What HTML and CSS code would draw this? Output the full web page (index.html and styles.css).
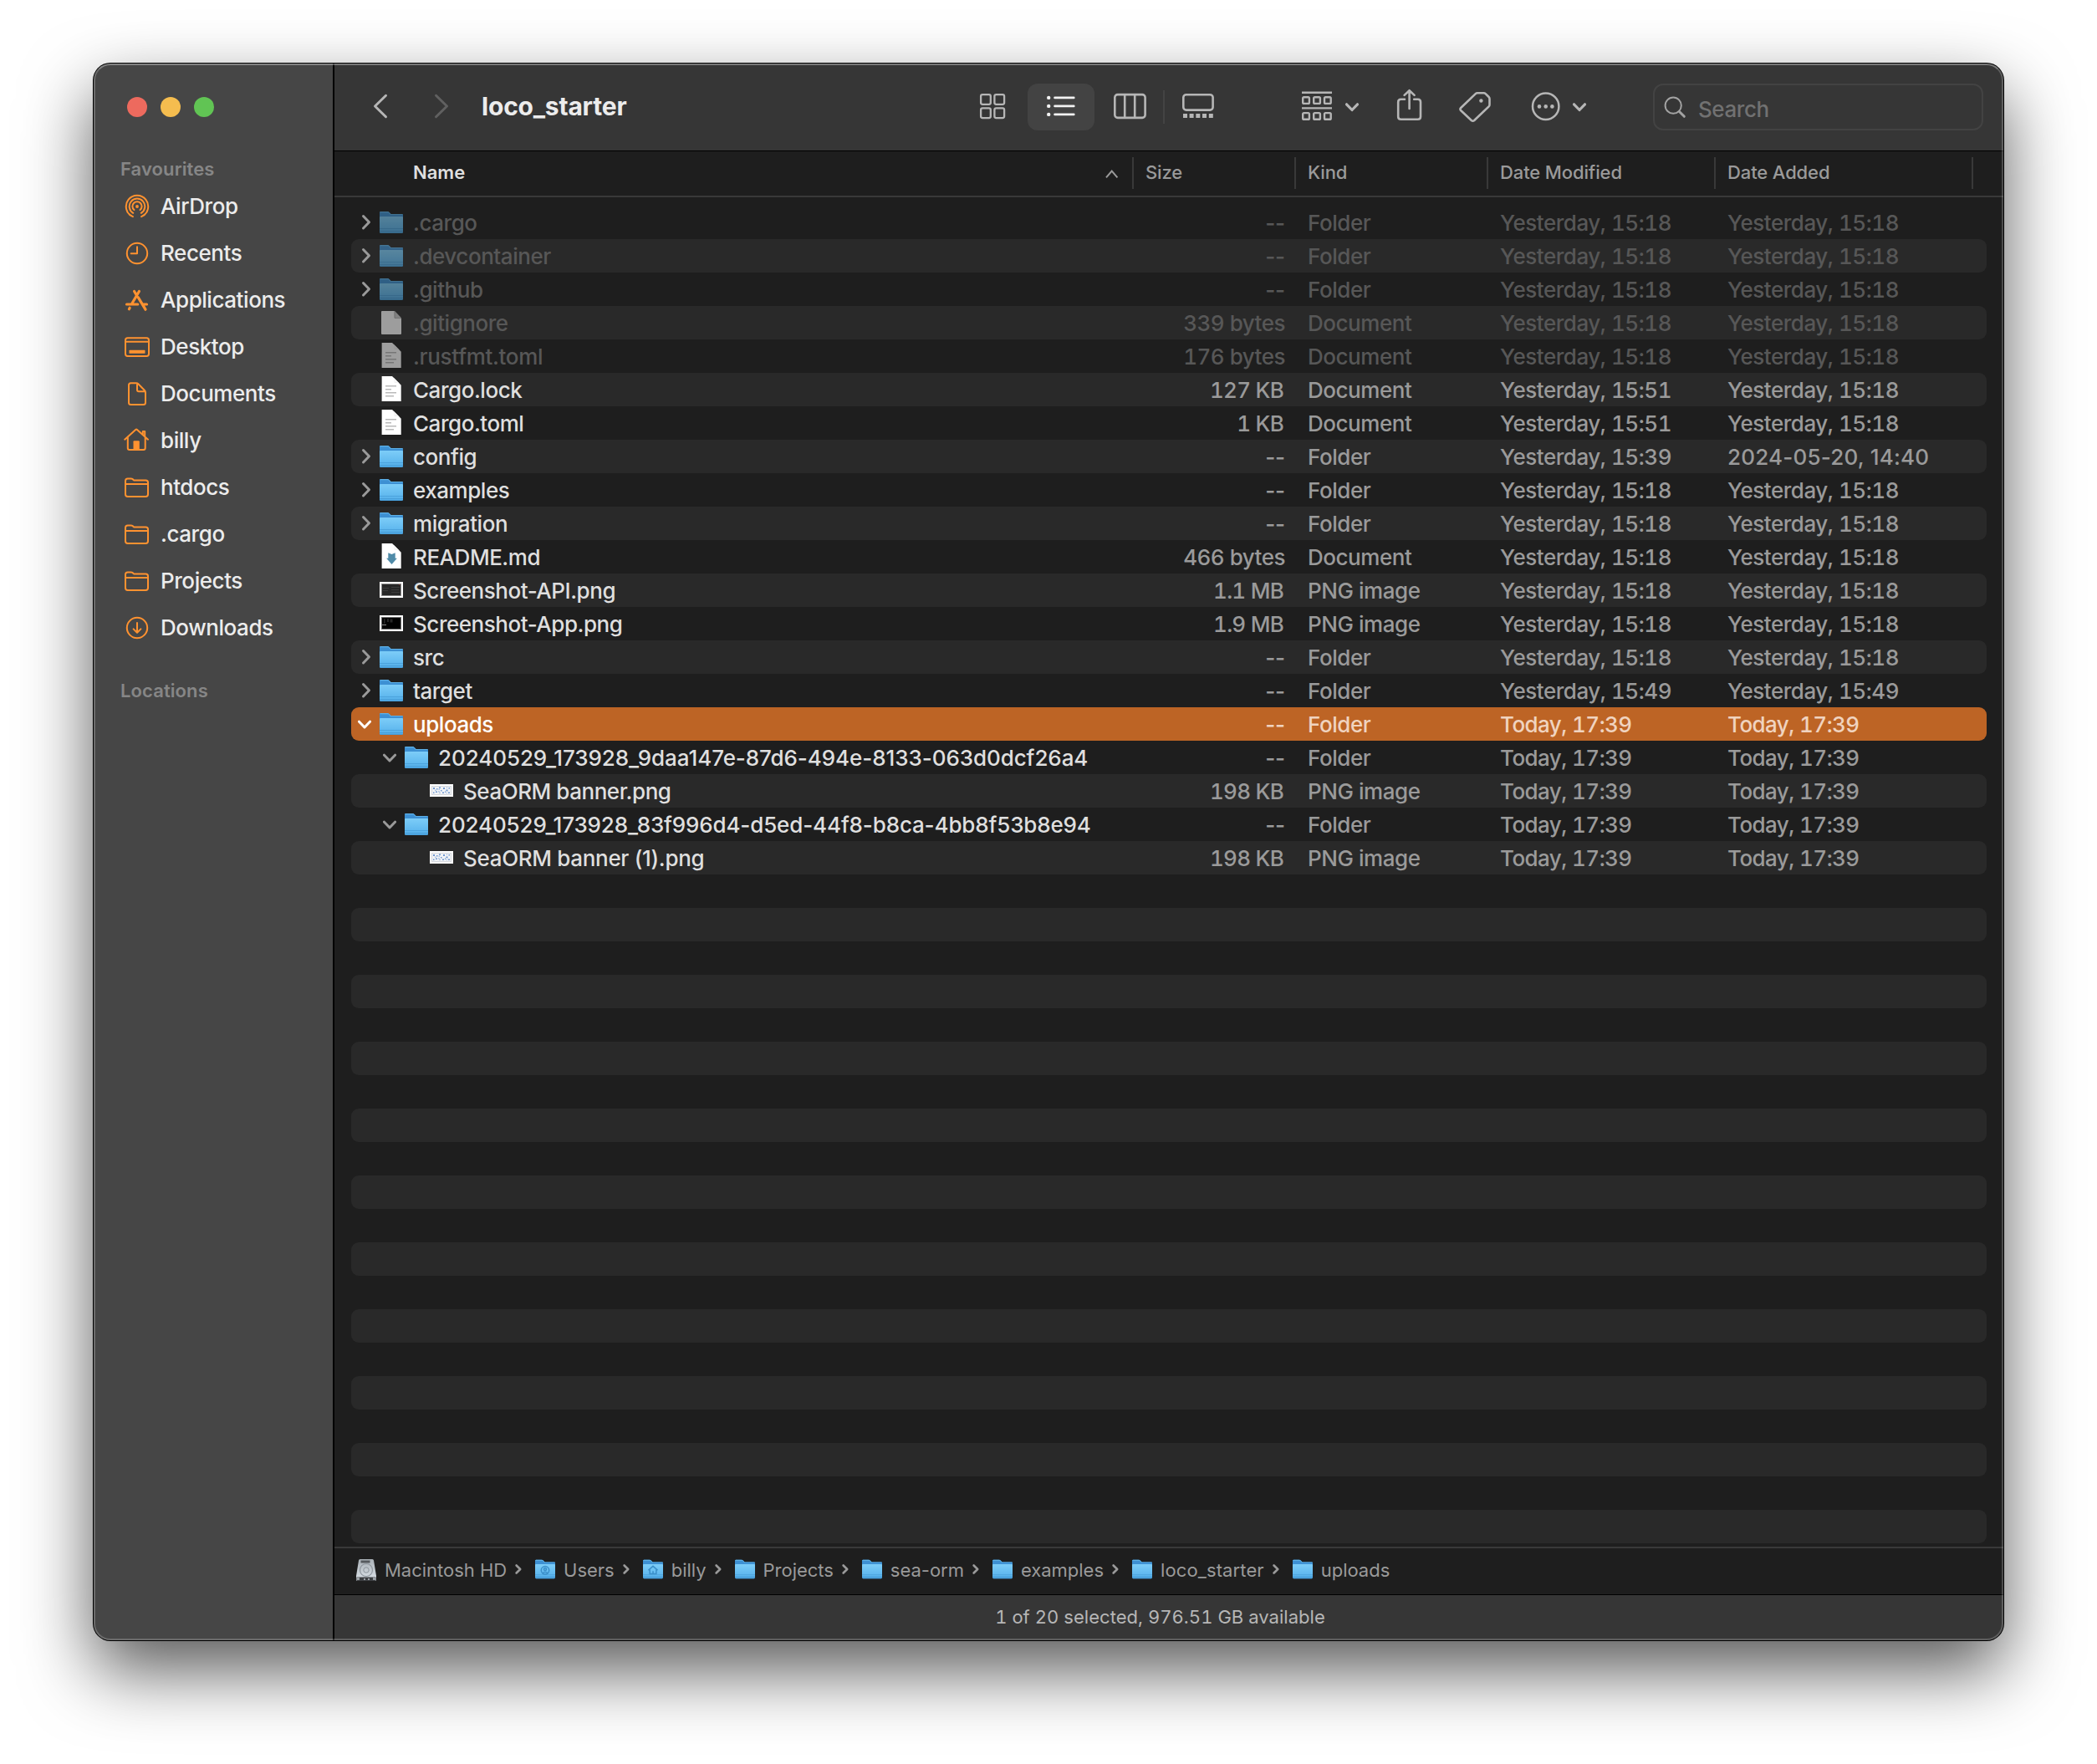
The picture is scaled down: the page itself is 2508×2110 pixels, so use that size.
FILE: index.html
```html
<!DOCTYPE html>
<html lang="en">
<head>
<meta charset="utf-8">
<title>loco_starter</title>
<link rel="stylesheet" href="styles.css">
</head>
<body>
<svg class="defs" aria-hidden="true">
  <defs>
    <linearGradient id="g-front" x1="0" y1="0" x2="0" y2="1"><stop offset="0" stop-color="#7dcdf8"/><stop offset=".75" stop-color="#5eb7ee"/><stop offset="1" stop-color="#4fa9e4"/></linearGradient>
    <linearGradient id="g-disk" x1="0" y1="0" x2="0" y2="1"><stop offset="0" stop-color="#a9b0b6"/><stop offset="1" stop-color="#dde4ea"/></linearGradient>
    <symbol id="folder" viewBox="0 0 28 40">
      <path fill="#3d90d3" d="M0 8.2Q0 7 1.2 7H9c1.2 0 2 .4 2.800 1.200L13.500 10H27q1 0 1 1V20H0z"/>
      <path fill="#5db0e6" d="M.3 7.700Q.6 7 1.400 7H9c1.200 0 2 .4 2.800 1.200L13.500 10H27.500v1H13L10.500 8.300H.3z"/>
      <path fill="url(#g-front)" d="M0 14q0-1 1-1H27q1 0 1 1V31.500q0 1.500-1.500 1.500h-25Q0 33 0 31.500z"/>
      <path fill="#3f92cd" d="M0 27.300h28v.7H0zM0 30.300h28v.7H0zM.8 32.300h26.400v.8H.8z" opacity=".75"/>
    </symbol>
    <symbol id="file" viewBox="0 0 28 40">
      <path fill="#fff" d="M2.600 4H15L25.700 14.700V34H2.600z"/>
      <path fill="#d8d8d8" d="M15 4L25.700 14.700Q23.500 11.200 17.800 11.400Q18.300 6 15 4z"/>
      <path fill="#f7f7f7" d="M16.500 5.500L24 13Q21 11.500 18 11.200Q18 8 16.500 5.500z"/>
      <path fill="#b9b9b9" d="M7 15h13v1.600H7zM7 19h7v1.600H7zM7 23h13v1.600H7zM7 27h10v1.600H7z"/>
    </symbol>
    <symbol id="blank" viewBox="0 0 28 40">
      <path fill="#fff" fill-opacity=".96" d="M2 7q0-1 1-1H17.800L26 14.500V33q0 1-1 1H3q-1 0-1-1z"/>
      <path fill="#c4c4c4" d="M17.800 6L26 14.500H18.800q-1 0-1-1z"/>
      <path fill="#777" d="M17.500 6h.8v7.500q0 .7.700.7h7v.8h-7.300q-1.200 0-1.200-1.200z" opacity=".6"/>
    </symbol>
    <symbol id="markdown" viewBox="0 0 28 40">
      <path fill="#fff" d="M2.600 4H15L25.700 14.700V34H2.600z"/>
      <path fill="#d8d8d8" d="M15 4L25.700 14.700Q23.500 11.200 17.800 11.400Q18.300 6 15 4z"/>
      <path fill="#f7f7f7" d="M16.500 5.500L24 13Q21 11.500 18 11.200Q18 8 16.500 5.500z"/>
      <path fill="#508ba8" d="M10.300 15.200L14.500 17l4.200-1.800v6.600h2.200L14.500 29l-6.400-7.200h2.200z"/>
    </symbol>
    <symbol id="shot" viewBox="0 0 28 40">
      <path fill="#fff" d="M0 10h28v19H0z"/><path fill="#8c8c8c" d="M2 12h24v15H2z"/><path fill="#262626" d="M3 13h22v13H3z"/>
      <path fill="#3b3b3b" d="M4 17h7v1H4zM4 20h6v1H4zM14 16h10v1H14zM14 19h9v1h-9zM14 22h10v1H14z"/><path fill="#7c3b35" d="M23 13h1.500v1H23z"/>
    </symbol>
    <symbol id="shot-dark" viewBox="0 0 28 40">
      <path fill="#fff" d="M0 10h28v19H0z"/><path fill="#6f6f6f" d="M2 12h24v15H2z"/><path fill="#000" d="M3 13h22v13H3z"/>
      <path fill="#262626" d="M5 14h1.500v6H5zM9 14h2v4H9zM12.500 14.500h3v4h-3z"/><path fill="#8b8b8b" d="M3 21h5v1H3z"/>
    </symbol>
    <symbol id="banner" viewBox="0 0 28 40">
      <path fill="#fff" d="M0 12h28v15H0z"/><path fill="#d4d7dc" d="M2 14h24v11H2z"/><path fill="#f1f3f6" d="M3 15h22v9H3z"/>
      <path fill="#6f97cf" d="M4 16h2v2H4zM8 17h1.500v1.500H8zM7 20.500h2V22H7zM11 15.500h2V17h-2zM13 19h1.500v1.500H13zM16 16h2v2h-2zM15 21.500h2V23h-2zM19.500 18.500h2v2h-2zM22.500 16h1.500v1.500h-1.500zM22 21.500h2V23h-2zM4 21.500h1.500V23H4zM10.500 20h1v1.500h-1zM18 20.500h1V22h-1z"/>
      <path fill="#a9bfe0" d="M6 18.500h1.500V20H6zM10.500 17.500H12V19h-1.500zM20 15.500h1V17h-1zM11 22h2v1h-2zM19.500 22H21v1h-1.500z"/>
    </symbol>
    <symbol id="closed" viewBox="0 0 26 40"><path d="M6.500 12.500L13.500 19.700L6.500 27" fill="none" stroke="currentColor" stroke-width="3" stroke-linecap="round" stroke-linejoin="round"/></symbol>
    <symbol id="open" viewBox="0 0 26 40"><path d="M1.500 17.200L8 24L14.500 17.200" fill="none" stroke="currentColor" stroke-width="3" stroke-linecap="round" stroke-linejoin="round"/></symbol>
    <symbol id="side-folder" viewBox="0 0 32 32"><path d="M2 24.300V8.200Q2 5.400 4.700 5.400H8.600Q9.800 5.400 10.600 6.100L11.500 6.900Q12.300 7.600 13.500 7.600H26.300Q29 7.600 29 10.200V24.300Q29 27 26.300 27H4.700Q2 27 2 24.300zM2.500 12.100H28.500"/></symbol>
    <symbol id="sep" viewBox="0 0 34 40"><path d="M11.600 15.500L16.200 20L11.600 24.500" fill="none" stroke="#9a9a9a" stroke-width="2.600" stroke-linecap="round" stroke-linejoin="round"/></symbol>
  </defs>
</svg>

<main class="window">
  <aside class="sidebar">
    <div class="lights"><i class="red"></i><i class="yellow"></i><i class="green"></i></div>
    <h2>Favourites</h2>
    <nav>
      <a><svg viewBox="0 0 32 32"><path d="M10.900 28.200A13.200 13.200 0 1 1 21.100 28.200M11.200 23.800A9.300 9.300 0 1 1 20.800 23.800M12.400 20.100A5.600 5.600 0 1 1 19.600 20.100"/><circle cx="16" cy="16" r="1.900" class="solid"/></svg>AirDrop</a>
      <a><svg viewBox="0 0 32 32"><circle cx="16" cy="16" r="12.200"/><path d="M16 8.200V16.300H8.700"/></svg>Recents</a>
      <a><svg viewBox="0 0 32 32" class="apps"><path d="M12.600 5.500L14.800 9.200M18.400 5.500L9.600 20.500M17.200 12.600L26 27.200M3.500 21H16.800M22.600 21H27.500M6.400 26.700L7.200 25.300"/></svg>Applications</a>
      <a><svg viewBox="0 0 32 32"><rect x="2" y="5.300" width="28" height="21.600" rx="2.600"/><path d="M2 9.700H30"/><rect x="6.500" y="19.800" width="19" height="4" rx=".6" class="solid"/></svg>Desktop</a>
      <a><svg viewBox="0 0 32 32"><path d="M6 26.500V5.800Q6 3.300 8.400 3.300H15Q16.400 3.300 17.400 4.300L25 12Q26 13 26 14.400V26.500Q26 29 23.500 29H8.500Q6 29 6 26.500zM16 3.500V11.300Q16 13.200 18 13.200H25.500"/></svg>Documents</a>
      <a><svg viewBox="0 0 32 32"><path d="M1.200 14.700L14.200 3Q15.100 2.200 16 3L29 14.700M4.800 12V25Q4.800 27 6.800 27H23.700Q25.700 27 25.700 25V12M22.800 8.600V5H25.200V11"/><path d="M11.500 27V17.200Q11.500 16.200 12.500 16.200H17.800Q18.800 16.200 18.800 17.200V27z" class="solid"/></svg>billy</a>
      <a><svg><use href="#side-folder"/></svg>htdocs</a>
      <a><svg><use href="#side-folder"/></svg>.cargo</a>
      <a><svg><use href="#side-folder"/></svg>Projects</a>
      <a><svg viewBox="0 0 32 32"><circle cx="16" cy="16" r="12.200"/><path d="M16 10V21.500M11.600 17.400L16 21.700L20.400 17.400"/></svg>Downloads</a>
    </nav>
    <h2 class="locations">Locations</h2>
  </aside>

  <section class="content">
    <header class="toolbar">
      <svg class="nav" viewBox="440 100 30 56"><path d="M461.500 114.300L448.500 127L461.500 139.700" fill="none" stroke="#b6b6b6" stroke-width="3" stroke-linecap="round" stroke-linejoin="round"/></svg>
      <svg class="nav forward" viewBox="513 100 30 56"><path d="M521.500 114.300L534.500 127L521.500 139.700" fill="none" stroke="#606060" stroke-width="3" stroke-linecap="round" stroke-linejoin="round"/></svg>
      <h1>loco_starter</h1>
      <div class="views">
        <svg class="view" viewBox="1147 100 80 56"><g fill="none" stroke="#b6b6b6" stroke-width="2.300"><rect x="1173.100" y="113.100" width="11.700" height="11.700" rx="2"/><rect x="1189.400" y="113.100" width="11.700" height="11.700" rx="2"/><rect x="1173.100" y="129.400" width="11.700" height="11.700" rx="2"/><rect x="1189.400" y="129.400" width="11.700" height="11.700" rx="2"/></g></svg>
        <svg class="view active" viewBox="1229 100 80 56"><g stroke="#f2f2f2" stroke-linecap="round"><path stroke-width="2.600" d="M1261.500 116.900H1284.300M1261.500 126.900H1284.300M1261.500 136.900H1284.300"/><path stroke-width="4.400" d="M1254.200 116.900h.01M1254.200 126.900h.01M1254.200 136.900h.01"/></g></svg>
        <svg class="view" viewBox="1311 100 80 56"><g fill="none" stroke="#b6b6b6" stroke-width="2.600"><rect x="1333.300" y="113.100" width="36.300" height="27.800" rx="3.400"/><path d="M1345.200 113V141M1357.200 113V141"/></g></svg>
        <i class="divider"></i>
        <svg class="view" viewBox="1393 100 80 56"><rect x="1415.300" y="113.200" width="35.300" height="18.400" rx="3.400" fill="none" stroke="#b6b6b6" stroke-width="2.600"/><path fill="#b6b6b6" d="M1415 136h5v5h-5zM1422.600 136h5v5h-5zM1430.300 136h5v5h-5zM1438 136h5v5h-5zM1445.800 136h5v5h-5z"/></svg>
      </div>
      <svg class="group" viewBox="1550 100 80 56"><path d="M1557 110.700H1593M1557 129.400H1593" stroke="#b6b6b6" stroke-width="2.400"/><g fill="none" stroke="#b6b6b6" stroke-width="2.400"><rect x="1558.200" y="116.200" width="7.700" height="7.700" rx="1.400"/><rect x="1571.200" y="116.200" width="7.700" height="7.700" rx="1.400"/><rect x="1584" y="116.200" width="7.700" height="7.700" rx="1.400"/><rect x="1558.200" y="135.100" width="7.700" height="7.700" rx="1.400"/><rect x="1571.200" y="135.100" width="7.700" height="7.700" rx="1.400"/><rect x="1584" y="135.100" width="7.700" height="7.700" rx="1.400"/></g><path d="M1610.500 124.800L1617 131.500L1623.500 124.800" fill="none" stroke="#b6b6b6" stroke-width="3.200" stroke-linecap="round" stroke-linejoin="round"/></svg>
      <svg class="share" viewBox="1665 100 40 56"><g fill="none" stroke="#b6b6b6" stroke-width="2.600" stroke-linecap="round" stroke-linejoin="round"><path d="M1680 118.800H1675.500Q1672.200 118.800 1672.200 122V139.500Q1672.200 142.700 1675.500 142.700H1695.700Q1699 142.700 1699 139.500V122Q1699 118.800 1695.700 118.800H1691.200"/><path d="M1685.600 130V108.600M1679.600 113.900L1685.600 108.200L1691.600 113.900"/></g></svg>
      <svg class="tag" viewBox="1740 100 50 56"><path d="M1767 111.200H1774.500Q1775.800 111.200 1776.700 112.100L1780.600 116Q1781.500 116.900 1781.500 118.200V125.200Q1781.500 126.500 1780.600 127.400L1763.200 144Q1761.500 145.500 1759.800 144L1747.300 132.300Q1745.600 130.700 1747.200 129L1764.800 112.100Q1765.700 111.200 1767 111.200z" fill="none" stroke="#b6b6b6" stroke-width="2.600" stroke-linejoin="round"/><circle cx="1771.400" cy="120.500" r="2.200" fill="#b6b6b6"/></svg>
      <svg class="more" viewBox="1825 100 80 56"><circle cx="1848.700" cy="127.200" r="15.700" fill="none" stroke="#b6b6b6" stroke-width="2.500"/><g fill="#b6b6b6"><circle cx="1841" cy="127.400" r="2.300"/><circle cx="1848.700" cy="127.400" r="2.300"/><circle cx="1856.400" cy="127.400" r="2.300"/></g><path d="M1882.500 124.800L1889 131.500L1895.500 124.800" fill="none" stroke="#b6b6b6" stroke-width="3.200" stroke-linecap="round" stroke-linejoin="round"/></svg>
      <div class="search"><svg viewBox="1985 108 36 40"><g fill="none" stroke="#a3a3a3" stroke-linecap="round"><circle cx="2001.200" cy="126.200" r="9.600" stroke-width="2"/><path d="M2008.500 133.500L2014.300 139.300" stroke-width="3"/></g></svg><span>Search</span></div>
    </header>

    <div class="cols head">
      <div class="name">Name<svg viewBox="0 0 20 12"><path d="M3 10.300L9.700 2.500L16.400 10.300" fill="none" stroke="#9a9a9a" stroke-width="2"/></svg></div>
      <div>Size</div><div>Kind</div><div>Date Modified</div><div>Date Added</div>
    </div>

    <div class="list">
      <div class="cols row hidden"><div class="name"><svg class="dis"><use href="#closed"/></svg><svg class="ico"><use href="#folder"/></svg>.cargo</div><div class="size">--</div><div>Folder</div><div>Yesterday, 15:18</div><div>Yesterday, 15:18</div></div>
      <div class="cols row hidden"><div class="name"><svg class="dis"><use href="#closed"/></svg><svg class="ico"><use href="#folder"/></svg>.devcontainer</div><div class="size">--</div><div>Folder</div><div>Yesterday, 15:18</div><div>Yesterday, 15:18</div></div>
      <div class="cols row hidden"><div class="name"><svg class="dis"><use href="#closed"/></svg><svg class="ico"><use href="#folder"/></svg>.github</div><div class="size">--</div><div>Folder</div><div>Yesterday, 15:18</div><div>Yesterday, 15:18</div></div>
      <div class="cols row hidden"><div class="name"><svg class="dis"></svg><svg class="ico"><use href="#blank"/></svg>.gitignore</div><div class="size bytes">339 bytes</div><div>Document</div><div>Yesterday, 15:18</div><div>Yesterday, 15:18</div></div>
      <div class="cols row hidden"><div class="name wide"><svg class="dis"></svg><svg class="ico"><use href="#file"/></svg>.rustfmt.toml</div><div class="size bytes">176 bytes</div><div>Document</div><div>Yesterday, 15:18</div><div>Yesterday, 15:18</div></div>
      <div class="cols row"><div class="name"><svg class="dis"></svg><svg class="ico"><use href="#file"/></svg>Cargo.lock</div><div class="size kb">127 KB</div><div>Document</div><div>Yesterday, 15:51</div><div>Yesterday, 15:18</div></div>
      <div class="cols row"><div class="name"><svg class="dis"></svg><svg class="ico"><use href="#file"/></svg>Cargo.toml</div><div class="size kb">1 KB</div><div>Document</div><div>Yesterday, 15:51</div><div>Yesterday, 15:18</div></div>
      <div class="cols row"><div class="name"><svg class="dis"><use href="#closed"/></svg><svg class="ico"><use href="#folder"/></svg>config</div><div class="size">--</div><div>Folder</div><div>Yesterday, 15:39</div><div class="iso">2024-05-20, 14:40</div></div>
      <div class="cols row"><div class="name"><svg class="dis"><use href="#closed"/></svg><svg class="ico"><use href="#folder"/></svg>examples</div><div class="size">--</div><div>Folder</div><div>Yesterday, 15:18</div><div>Yesterday, 15:18</div></div>
      <div class="cols row"><div class="name"><svg class="dis"><use href="#closed"/></svg><svg class="ico"><use href="#folder"/></svg>migration</div><div class="size">--</div><div>Folder</div><div>Yesterday, 15:18</div><div>Yesterday, 15:18</div></div>
      <div class="cols row"><div class="name"><svg class="dis"></svg><svg class="ico"><use href="#markdown"/></svg>README.md</div><div class="size bytes">466 bytes</div><div>Document</div><div>Yesterday, 15:18</div><div>Yesterday, 15:18</div></div>
      <div class="cols row"><div class="name"><svg class="dis"></svg><svg class="ico"><use href="#shot"/></svg>Screenshot-API.png</div><div class="size kb">1.1 MB</div><div>PNG image</div><div>Yesterday, 15:18</div><div>Yesterday, 15:18</div></div>
      <div class="cols row"><div class="name"><svg class="dis"></svg><svg class="ico"><use href="#shot-dark"/></svg>Screenshot-App.png</div><div class="size kb">1.9 MB</div><div>PNG image</div><div>Yesterday, 15:18</div><div>Yesterday, 15:18</div></div>
      <div class="cols row"><div class="name"><svg class="dis"><use href="#closed"/></svg><svg class="ico"><use href="#folder"/></svg>src</div><div class="size">--</div><div>Folder</div><div>Yesterday, 15:18</div><div>Yesterday, 15:18</div></div>
      <div class="cols row"><div class="name"><svg class="dis"><use href="#closed"/></svg><svg class="ico"><use href="#folder"/></svg>target</div><div class="size">--</div><div>Folder</div><div>Yesterday, 15:49</div><div>Yesterday, 15:49</div></div>
      <div class="cols row selected"><div class="name"><svg class="dis"><use href="#open"/></svg><svg class="ico"><use href="#folder"/></svg>uploads</div><div class="size">--</div><div>Folder</div><div class="today">Today, 17:39</div><div class="today">Today, 17:39</div></div>
      <div class="cols row"><div class="name l1"><svg class="dis"><use href="#open"/></svg><svg class="ico"><use href="#folder"/></svg>20240529_173928_9daa147e-87d6-494e-8133-063d0dcf26a4</div><div class="size">--</div><div>Folder</div><div class="today">Today, 17:39</div><div class="today">Today, 17:39</div></div>
      <div class="cols row"><div class="name l2"><svg class="dis"></svg><svg class="ico"><use href="#banner"/></svg>SeaORM banner.png</div><div class="size kb">198 KB</div><div>PNG image</div><div class="today">Today, 17:39</div><div class="today">Today, 17:39</div></div>
      <div class="cols row"><div class="name l1 second"><svg class="dis"><use href="#open"/></svg><svg class="ico"><use href="#folder"/></svg>20240529_173928_83f996d4-d5ed-44f8-b8ca-4bb8f53b8e94</div><div class="size">--</div><div>Folder</div><div class="today">Today, 17:39</div><div class="today">Today, 17:39</div></div>
      <div class="cols row"><div class="name l2 wide"><svg class="dis"></svg><svg class="ico"><use href="#banner"/></svg>SeaORM banner (1).png</div><div class="size kb">198 KB</div><div>PNG image</div><div class="today">Today, 17:39</div><div class="today">Today, 17:39</div></div>
      <div class="row"></div><div class="row"></div><div class="row"></div><div class="row"></div><div class="row"></div>
      <div class="row"></div><div class="row"></div><div class="row"></div><div class="row"></div><div class="row"></div>
      <div class="row"></div><div class="row"></div><div class="row"></div><div class="row"></div><div class="row"></div>
      <div class="row"></div><div class="row"></div><div class="row"></div><div class="row"></div><div class="row"></div>
    </div>

    <footer class="path">
      <svg class="pico" viewBox="0 0 24 40"><path fill="url(#g-disk)" d="M3 9.500Q3.200 8 4.600 8H19.400Q20.800 8 21 9.500L24 28V32.500Q24 34 22.500 34H1.500Q0 34 0 32.500V28z"/><path fill="#55595d" d="M5.500 9.500h11v3h-11z"/><circle cx="12" cy="21" r="7.500" fill="none" stroke="#8f979e" stroke-width="1.200"/><circle cx="12" cy="21" r="3.200" fill="none" stroke="#8f979e" stroke-width="1"/><path d="M.5 29.500h23V33q0 1-1 1h-21q-1 0-1-1z" fill="#3c3f42"/><path fill="#9aa0a5" d="M1 30h3v3H1zM9 31h2v2H9zM14 31h2v2h-2zM20 30h3v3h-3z"/></svg><span>Macintosh HD</span>
      <svg class="sep"><use href="#sep"/></svg><svg class="pico fold" viewBox="0 0 28 40"><use href="#folder" width="28" height="40"/><g fill="none" stroke="#3b8fc9" stroke-width="1.800"><circle cx="14" cy="21.500" r="5.500"/><circle cx="14" cy="20" r="1.800"/><path d="M10.500 25.500Q14 22 17.500 25.500"/></g></svg><span>Users</span>
      <svg class="sep"><use href="#sep"/></svg><svg class="pico fold" viewBox="0 0 28 40"><use href="#folder" width="28" height="40"/><path d="M7.500 21.500L14 15.800L20.500 21.500M9.500 20.500V26.500H18.500V20.500M14 26.500V22.500" fill="none" stroke="#3b8fc9" stroke-width="1.800"/></svg><span>billy</span>
      <svg class="sep"><use href="#sep"/></svg><svg class="pico fold"><use href="#folder"/></svg><span>Projects</span>
      <svg class="sep"><use href="#sep"/></svg><svg class="pico fold"><use href="#folder"/></svg><span>sea-orm</span>
      <svg class="sep"><use href="#sep"/></svg><svg class="pico fold"><use href="#folder"/></svg><span>examples</span>
      <svg class="sep"><use href="#sep"/></svg><svg class="pico fold"><use href="#folder"/></svg><span class="loco">loco_starter</span>
      <svg class="sep"><use href="#sep"/></svg><svg class="pico fold"><use href="#folder"/></svg><span>uploads</span>
    </footer>
    <footer class="status">1 of 20 selected, 976.51 GB available</footer>
  </section>
</main>
</body>
</html>
```
FILE: styles.css
```css
* { box-sizing: border-box; }
html, body { margin: 0; height: 2110px; background: #fff; overflow: hidden; }
body {
  padding: 76px 112px 0;
  font: 450 26px Inter, "Liberation Sans", sans-serif;
  letter-spacing: -0.44px;
  color: #dfdfdf;
}
svg { display: block; flex: none; }
.defs { position: absolute; width: 0; height: 0; }

.window {
  position: relative;
  display: flex;
  width: 2284px;
  height: 1886px;
  border-radius: 20px;
  overflow: hidden;
  background: #1e1e1e;
  box-shadow: 0 0 0 1px #000, 0 36px 84px rgba(0, 0, 0, .66);
}
/* Light rim drawn along the inside of the window edge */
.window::after {
  content: "";
  position: absolute;
  inset: 0;
  border: 2px solid rgba(255, 255, 255, .2);
  border-top-color: rgba(255, 255, 255, .33);
  border-radius: 20px;
  pointer-events: none;
}

.sidebar {
  flex: none;
  width: 288px;
  background: #464646;
  border-right: 2px solid #000;
  padding-top: 40px;
}
.lights { display: flex; gap: 16px; padding-left: 40px; height: 70px; }
.lights i { width: 24px; height: 24px; border-radius: 50%; }
.red { background: #ed6a5e; }
.yellow { background: #f5bd4f; }
.green { background: #61c454; }
.sidebar h2 {
  margin: 0 0 1px;
  padding-left: 32px;
  font-size: 22px;
  font-weight: 600;
  line-height: 32px;
  letter-spacing: 0.1px;
  color: #868686;
}
.sidebar .locations { margin-top: 31px; }
.sidebar a {
  display: flex;
  gap: 12px;
  height: 56px;
  padding-left: 36px;
  line-height: 55px;
  color: #ececec;
}
.sidebar a svg {
  width: 32px;
  height: 32px;
  margin-top: 12px;
  fill: none;
  stroke: #ff9230;
  stroke-width: 2;
  stroke-linecap: round;
  stroke-linejoin: round;
}
.sidebar .solid { fill: #ff9230; stroke: none; }
.sidebar a svg.apps { stroke-width: 3.2; }

.content { flex: 1; display: flex; flex-direction: column; min-width: 0; }
.toolbar {
  display: flex;
  height: 105px;
  padding: 24px 24px 0 40px;
  background: #363636;
  border-bottom: 1px solid #000;
}
.toolbar svg { height: 56px; }
.nav { width: 30px; }
.forward { margin-left: 43px; }
.toolbar h1 {
  flex: 1;
  margin: 0 0 0 33px;
  font-size: 30px;
  font-weight: 700;
  line-height: 54px;
  letter-spacing: -0.2px;
  color: #ececec;
}
.views { display: flex; gap: 2px; width: 326px; height: 56px; margin-right: 77px; }
.view { width: 80px; border-radius: 12px; }
.view.active { background: #434343; }
.divider { width: 2px; height: 40px; margin: 8px -2px 0; background: #434343; }
.group { width: 80px; }
.share { width: 40px; margin-left: 35px; }
.tag { width: 50px; margin-left: 35px; }
.more { width: 80px; margin-left: 35px; }
.search {
  display: flex;
  width: 395px;
  height: 56px;
  margin-left: 72px;
  padding-left: 6px;
  border: 2px solid #434343;
  border-radius: 12px;
  line-height: 57px;
  color: #717171;
}
.toolbar .search svg { width: 36px; height: 40px; margin: 6px 10px 0 0; }

.cols { display: grid; grid-template-columns: 936px 194px 230px 272px 1fr; }
.head {
  height: 55px;
  margin: 0;
  padding: 0 36px 0 20px;
  border-bottom: 2px solid #393939;
  font-size: 22px;
  font-weight: 500;
  line-height: 50px;
  letter-spacing: -0.12px;
  color: #9a9a9a;
}
.head > div { padding-left: 14px; background: linear-gradient(#393939, #393939) right 7px / 2px 38px no-repeat; }
.head > div.name { display: flex; justify-content: space-between; padding: 0 16px 0 74px; font-weight: 600; letter-spacing: 0; color: #dfdfdf; background-position: right 7px; }
.head .name svg { width: 20px; height: 12px; margin-top: 21px; }

.list { flex: 1; padding: 10px 20px 0; overflow: hidden; }
.row { height: 40px; border-radius: 9px; line-height: 41px; color: #9a9a9a; font-variant-numeric: tabular-nums; letter-spacing: -0.45px; }
.row:nth-child(even) { background: #292929; }
.row > div { padding-left: 14px; white-space: pre; }
.row > .name { display: flex; padding-left: 8px; color: #dfdfdf; font-variant-numeric: normal; letter-spacing: -0.46px; }
.row > .wide { letter-spacing: -0.32px; }
.row > .l1 { padding-left: 38px; letter-spacing: -0.07px; }
.row > .second { letter-spacing: -0.14px; }
.row > .l2 { padding-left: 68px; }
.row > .size { padding: 0 13px 0 0; text-align: right; font-variant-numeric: normal; letter-spacing: -0.15px; }
.row > .bytes { font-variant-numeric: tabular-nums; letter-spacing: -0.5px; }
.row > .kb { font-variant-numeric: tabular-nums; letter-spacing: -0.75px; padding-right: 15px; }
.row > .iso { font-variant-numeric: normal; letter-spacing: 0.2px; }
.row > .today { letter-spacing: -0.56px; }
.dis { width: 26px; height: 40px; color: #9a9a9a; }
.ico { width: 28px; height: 40px; margin-right: 12px; }
.row.hidden, .row.hidden > .name { color: #575757; }
.hidden .ico { opacity: .57; }
.row.selected { background: #bd6425; color: #f0d3bf; }
.selected > .name, .selected .dis { color: #fff; }

.path {
  display: flex;
  height: 58px;
  padding: 0 26px;
  border-top: 2px solid #393939;
  border-bottom: 1px solid #000;
  font-size: 22px;
  font-weight: 425;
  line-height: 52px;
  letter-spacing: -0.02px;
  color: #9a9a9a;
}
.path svg { margin-top: 5px; }
.pico { width: 24px; height: 40px; }
.path span { margin-left: 10px; }
.path .sep { width: 34px; height: 40px; }
.path .loco { letter-spacing: 0.12px; }
.status {
  height: 54px;
  padding-right: 21px;
  background: #363636;
  text-align: center;
  font-size: 22px;
  font-weight: 425;
  line-height: 52px;
  letter-spacing: 0.04px;
  font-variant-numeric: tabular-nums;
  color: #b6b6b6;
}
```
